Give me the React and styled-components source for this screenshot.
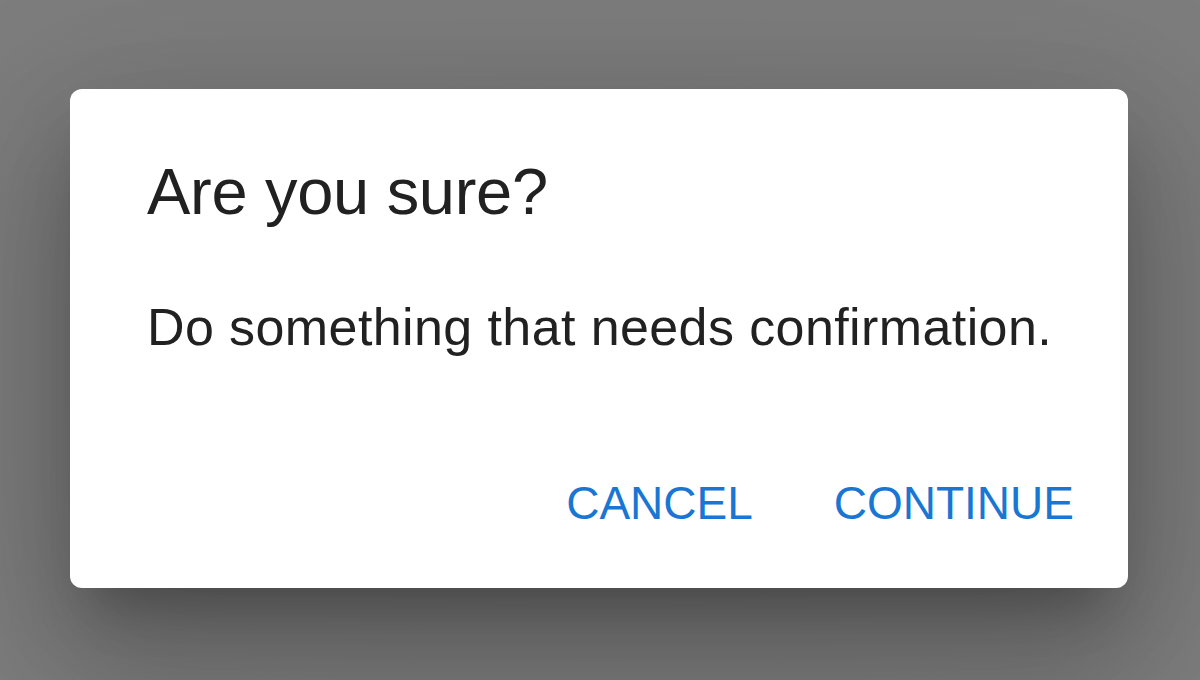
import styled, { createGlobalStyle } from "styled-components";

const GlobalStyle = createGlobalStyle`
    html, body {
        margin: 0;
        padding: 0;
        height: 100%;
    }

    body {
        background-color: #7b7b7b;
        font-family: 'Liberation Sans', Arial, sans-serif;
        overflow: hidden;
    }
`;

export default function App() {
    return (
        <>
            <GlobalStyle />
            <Backdrop>
                <Dialog role="dialog" aria-labelledby="dialog-title">
                    <Title id="dialog-title">Are you sure?</Title>
                    <Content>Do something that needs confirmation.</Content>
                    <Actions>
                        <TextButton>Cancel</TextButton>
                        <TextButton>Continue</TextButton>
                    </Actions>
                </Dialog>
            </Backdrop>
        </>
    );
};

const Backdrop = styled.div`
    width: 100vw;
    height: 100vh;
    box-sizing: border-box;
    padding: 89px 0 0 70px;
    display: flex;
    justify-content: flex-start;
    align-items: flex-start;
    background: radial-gradient(ellipse at 50% 50%, #7a7a7a 0%, #7d7d7d 100%);
`;

const Dialog = styled.div`
    width: 1058px;
    box-sizing: border-box;
    padding: 51px 28px 25px 77px;
    background-color: #ffffff;
    border-radius: 12px;
    display: flex;
    flex-direction: column;
    box-shadow:
        0px 36px 49px -23px rgba(0, 0, 0, 0.25),
        0px 78px 124px 10px rgba(0, 0, 0, 0.16),
        0px 29px 150px 26px rgba(0, 0, 0, 0.12);
`;

const Title = styled.h2`
    margin: 0;
    font-size: 65px;
    font-weight: 400;
    line-height: 104px;
    letter-spacing: -0.3px;
    color: #212121;
`;

const Content = styled.p`
    margin: 44px 0 0 0;
    font-size: 52px;
    font-weight: 400;
    line-height: 78px;
    letter-spacing: 0.4px;
    color: #212121;
`;

const Actions = styled.div`
    margin-top: 78px;
    display: flex;
    justify-content: flex-end;
    gap: 29px;
`;

const TextButton = styled.button`
    background: none;
    border: none;
    border-radius: 12px;
    padding: 19px 26px 20px;
    font-family: 'Liberation Sans', Arial, sans-serif;
    font-size: 46px;
    line-height: 80px;
    font-weight: 400;
    text-transform: uppercase;
    color: #1976d2;
    cursor: pointer;

    &:hover {
        background-color: rgba(25, 118, 210, 0.04);
    }
`;
